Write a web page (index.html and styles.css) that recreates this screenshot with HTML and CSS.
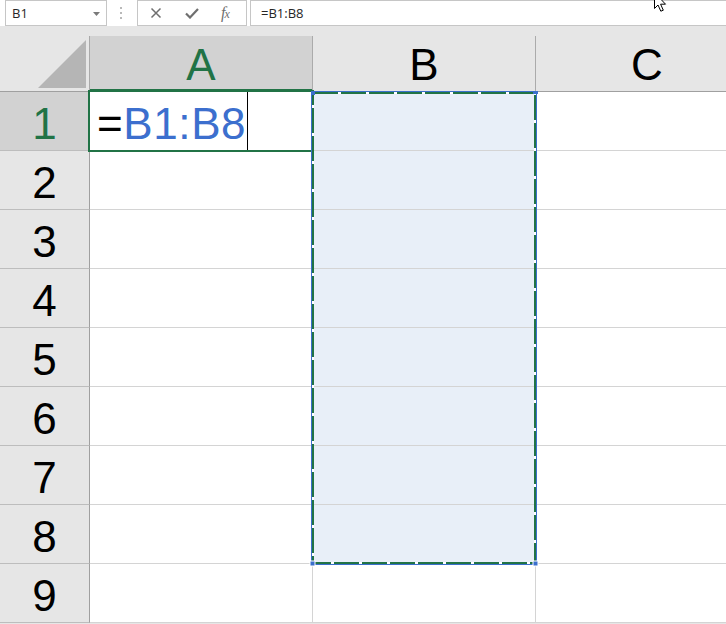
FILE: index.html
```html
<!DOCTYPE html>
<html>
<head>
<meta charset="utf-8">
<link rel="stylesheet" href="styles.css">
</head>
<body>
<div class="toolbar">
  <div class="namebox"><span>B1</span><svg class="caret" width="7" height="4" viewBox="0 0 7 4"><path d="M0 0H7L3.5 4Z" fill="#7a7a7a"/></svg></div>
  <div class="grip"><svg width="3" height="12" viewBox="0 0 3 12"><rect x="0" y="0" width="2" height="2" fill="#b9b9b9"/><rect x="0" y="5" width="2" height="2" fill="#b9b9b9"/><rect x="0" y="10" width="2" height="2" fill="#b9b9b9"/></svg></div>
  <div class="fxbox">
    <svg class="ic-x" width="12" height="12" viewBox="0 0 12 12"><path d="M1.5 1.5L10.5 10.5M10.5 1.5L1.5 10.5" stroke="#6f6f6f" stroke-width="1.5" fill="none"/></svg>
    <svg class="ic-ok" width="14" height="11" viewBox="0 0 14 11"><path d="M1 5.5L5 9.5L13 1" stroke="#6f6f6f" stroke-width="2.2" fill="none"/></svg>
    <span class="fx"><i>f</i><i class="fx-x">x</i></span>
  </div>
  <div class="formula">=B1:B8</div>
</div>

<div class="sheet">
  <div class="grid">
    <div class="corner"><svg width="48" height="48" viewBox="0 0 48 48"><path d="M48 0V48H0Z" fill="#b5b5b5"/></svg></div>
    <div class="colhead sel">A</div>
    <div class="colhead">B</div>
    <div class="colhead last">C</div>

    <div class="rowhead sel">1</div>
    <div class="cell active"><span class="entry">=<span class="ref">B1:B8</span></span><span class="caret-line"></span></div>
    <div class="cell range"></div>
    <div class="cell last"></div>

    <div class="rowhead">2</div><div class="cell"></div><div class="cell range"></div><div class="cell last"></div>
    <div class="rowhead">3</div><div class="cell"></div><div class="cell range"></div><div class="cell last"></div>
    <div class="rowhead">4</div><div class="cell"></div><div class="cell range"></div><div class="cell last"></div>
    <div class="rowhead">5</div><div class="cell"></div><div class="cell range"></div><div class="cell last"></div>
    <div class="rowhead">6</div><div class="cell"></div><div class="cell range"></div><div class="cell last"></div>
    <div class="rowhead">7</div><div class="cell"></div><div class="cell range"></div><div class="cell last"></div>
    <div class="rowhead">8</div><div class="cell"></div><div class="cell range"></div><div class="cell last"></div>
    <div class="rowhead">9</div><div class="cell"></div><div class="cell"></div><div class="cell last"></div>

    <div class="active-frame"></div>
    <svg class="range-frame" width="232" height="482" viewBox="0 0 232 482">
      <rect x="3.5" y="3.5" width="225" height="473" fill="none" stroke="#3b6fcc" stroke-width="1"/>
      <rect x="5" y="5" width="222" height="470" fill="none" stroke="#ffffff" stroke-width="2"/>
      <rect x="5" y="5" width="222" height="470" fill="none" stroke="#217346" stroke-width="2" stroke-dasharray="25 3"/>
      <rect x="4" y="4" width="3" height="3" fill="#3b6fcc"/>
      <rect x="225" y="3" width="5" height="3" fill="#3b6fcc"/>
      <rect x="2" y="473" width="5" height="5" fill="#3b6fcc" stroke="#ffffff" stroke-width="1"/>
      <rect x="225" y="473" width="5" height="5" fill="#3b6fcc" stroke="#ffffff" stroke-width="1"/>
    </svg>
  </div>
</div>

<svg class="pointer" width="16" height="14" viewBox="0 0 16 14"><path d="M2.5 -7.5V8.5L6 5L8.8 11.2L11.3 10.2L8.6 4.2H13.5Z" fill="#ffffff" stroke="#000000" stroke-width="1" stroke-linejoin="round"/></svg>
</body>
</html>
```
FILE: styles.css
```css
* { box-sizing: border-box; }
html, body { margin: 0; padding: 0; }
body {
  width: 726px;
  height: 624px;
  overflow: hidden;
  background: #e6e6e6;
  font-family: "Liberation Sans", Arial, sans-serif;
  position: relative;
}

.toolbar {
  display: flex;
  height: 26px;
  background: #ffffff;
}
.namebox {
  margin-left: 5px;
  width: 102px;
  border: 1px solid #c6c6c6;
  display: flex;
  align-items: center;
  justify-content: space-between;
  padding: 0 6px 0 6px;
  font: 13px "Open Sans", "Noto Sans", sans-serif;
  color: #262626;
  background: #fff;
}
.caret { margin-top: 1px; }
.grip {
  width: 30px;
  display: flex;
  align-items: center;
  justify-content: center;
  padding-right: 1px;
}
.fxbox {
  width: 110px;
  border: 1px solid #c6c6c6;
  display: flex;
  align-items: center;
  padding-left: 12px;
  background: #fff;
}
.ic-ok { margin-left: 23px; }
.fx {
  margin-left: 22px;
  font: italic 16px "Liberation Serif", serif;
  color: #6f6f6f;
  letter-spacing: -1px;
  line-height: 1;
}
.fx-x { font-size: 12px; }
.formula {
  margin-left: 3px;
  flex: 1;
  margin-right: -2px;
  border: 1px solid #c6c6c6;
  padding-left: 10px;
  display: flex;
  align-items: center;
  font: 13px "Open Sans", "Noto Sans", sans-serif;
  color: #262626;
  background: #fff;
}

.sheet { padding-top: 10px; }
.grid {
  position: relative;
  display: grid;
  grid-template-columns: 90px 223px 223px 223px;
  grid-template-rows: 56px repeat(9, 59px);
}
.corner {
  border-right: 1px solid #a9a9a9;
  border-bottom: 1px solid #a0a0a0;
  padding: 4px 0 0 38px;
}
.corner svg { display: block; }
.colhead {
  border-right: 1px solid #ababab;
  border-bottom: 1px solid #a0a0a0;
  display: flex;
  align-items: flex-end;
  justify-content: center;
  padding-bottom: 4px;
  font-size: 44px;
  line-height: 1;
  color: #000;
}
.colhead.sel {
  background: #d2d2d2;
  color: #217346;
  box-shadow: inset 0 -2px 0 #217346;
}
.rowhead {
  border-right: 1px solid #a0a0a0;
  border-bottom: 1px solid #bdbdbd;
  display: flex;
  align-items: flex-end;
  justify-content: center;
  padding-bottom: 4px;
  font-size: 44px;
  line-height: 1;
  color: #000;
}
.rowhead.sel {
  background: #d2d2d2;
  color: #217346;
  box-shadow: inset -1px 0 0 #217346;
  border-right-color: #217346;
}
.cell {
  background: #fff;
  border-right: 1px solid #d4d4d4;
  border-bottom: 1px solid #d4d4d4;
}
.cell.range { background: #e8eff8; }
.cell.active {
  display: flex;
  align-items: flex-end;
  padding: 0 0 4px 7px;
  font-size: 44px;
  line-height: 1;
  color: #000;
}
.entry { letter-spacing: 0.6px; }
.ref { color: #3c6fce; }
.caret-line {
  align-self: stretch;
  width: 1px;
  background: #000;
  margin: -1px 0 -4px 1px;
}
.active-frame {
  position: absolute;
  left: 88px;
  top: 54px;
  width: 226px;
  height: 62px;
  border: 2px solid #217346;
}
.range-frame {
  position: absolute;
  left: 308px;
  top: 52px;
}
.pointer {
  position: absolute;
  left: 652px;
  top: 0;
}
```
